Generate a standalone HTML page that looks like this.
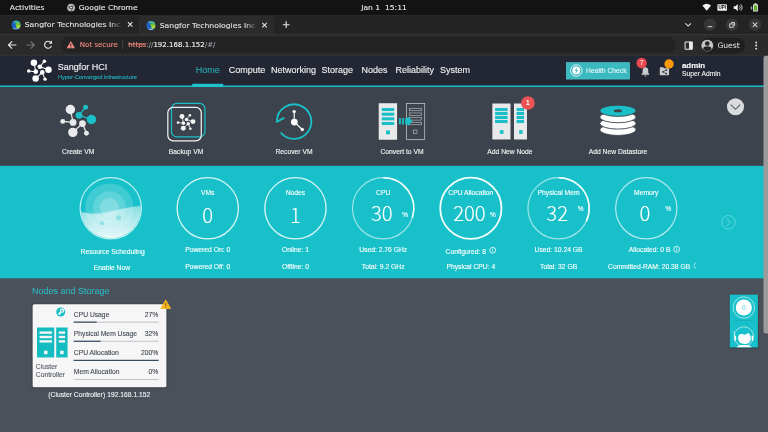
<!DOCTYPE html>
<html lang="en">
<head>
<meta charset="utf-8">
<title>Sangfor Technologies Inc.</title>
<style>
*{box-sizing:border-box;margin:0;padding:0}
html,body{width:768px;height:432px;overflow:hidden;background:#4a515b}
body{font-family:"Liberation Sans",Arial,sans-serif;color:#fff}
#s{position:absolute;left:0;top:0;width:1366px;height:768px;transform:scale(0.562225);transform-origin:0 0;overflow:hidden;background:#4a515b}
#s div,#s span,#s svg{position:absolute}
#s{-webkit-text-stroke:.2px currentColor}
.t{white-space:nowrap;line-height:1}
.c{white-space:nowrap;line-height:1;transform:translateX(-50%)}
.ui{font-family:"DejaVu Sans","Liberation Sans",sans-serif}
/* gnome top bar */
#gn{left:0;top:0;width:1366px;height:27px;background:#131313;font-size:13.5px;color:#e8e8e8}
/* chrome */
#tabs{left:0;top:27px;width:1366px;height:34px;background:#242424}
#tabs .tab{top:0;height:34px;width:240px;font-size:13.7px;color:#e2e2e2}
#tabs .act{background:#2b2b2b;border-radius:9px 9px 0 0;top:1px;height:33px;border:1px solid #3a3a3a;border-bottom:none}
#tb{left:0;top:61px;width:1366px;height:38px;background:#2b2b2b;border-top:1px solid #3a3a3a}
#url{left:108px;top:3px;width:1094px;height:29px;border-radius:14.5px;background:#232323;font-size:12.5px}
.fav{width:16px;height:16px;border-radius:50%;overflow:hidden;background:#2f7fd0}
/* app */
#hd{left:0;top:98.6px;width:1366px;height:54.4px;background:#232733}
#hl{left:0;top:152px;width:1366px;height:3px;background:#1bbcc5}
#ib{left:0;top:155px;width:1366px;height:140px;background:#3c434c}
#ts{left:0;top:294.5px;width:1366px;height:200.6px;background:#18c1c9}
.nav{font-size:16px;color:#f2f2f2;top:117.3px}
.lab{font-size:12px;color:#f4f4f4}
.sl{font-size:12px;color:#fff}
.num{font-family:"Noto Sans CJK SC","Liberation Sans",sans-serif;font-weight:300;font-size:36px;-webkit-text-stroke:.25px #fff;color:#fff;line-height:1;white-space:nowrap}
.pct{font-size:11.5px;color:#fff}
.row{font-size:12px;color:#444b55}
.val{font-size:12px;color:#444b55;text-align:right;width:60px}
.trk{height:2px;width:150.5px;left:131px;background:#c0c8d1}
.fil{height:2.4px;left:0;top:-.2px;background:#324459}
</style>
</head>
<body>
<div id="s">

<div id="gn" class="ui">
<span class="t" style="left:17.5px;top:6.8px">Activities</span>
<svg style="left:119px;top:6px" width="15" height="15" viewBox="0 0 16 16"><circle cx="8" cy="8" r="7.5" fill="#bdbdbd"/><circle cx="8" cy="8" r="3.2" fill="#131313"/><circle cx="8" cy="8" r="2.2" fill="#d8d8d8"/><path d="M8 4.8H14.6M5.2 9.6L2 3.8M10.8 9.6L7.6 15.4" stroke="#131313" stroke-width="1" fill="none"/></svg>
<span class="t" style="left:140px;top:6.8px">Google Chrome</span>
<span class="c" style="left:683px;top:6.8px">Jan 1&nbsp; 15:11</span>
<svg style="left:1245px;top:3px" width="110" height="21" viewBox="1245 3 110 21">
<path d="M1257 19.3L1249.3 9.7A12 12 0 0 1 1264.7 9.7Z" fill="#f0f0f0"/>
<rect x="1276" y="7.5" width="17" height="11.8" rx="1.5" fill="#f0f0f0"/><text x="1284.5" y="16.5" font-family="Liberation Sans,sans-serif" font-size="8" font-weight="700" text-anchor="middle" fill="#131313">UPI</text>
<path d="M1305 11h3.2l4-3.8v12.6l-4-3.8H1305z" fill="#f0f0f0"/><path d="M1315 10.2a4.5 4.5 0 0 1 0 6.6M1317.5 7.8a8 8 0 0 1 0 11.4" stroke="#f0f0f0" stroke-width="1.5" fill="none"/>
<rect x="1339.5" y="7.5" width="8.5" height="13" rx="1" fill="#f0f0f0"/><rect x="1342" y="5.8" width="3.5" height="2" fill="#f0f0f0"/><rect x="1341" y="9.5" width="5.5" height="9.5" fill="#5fae2e"/><path d="M1337.5 10l-3 4.5h2.2l-1 4 3-4.8h-2.2z" fill="#f0f0f0"/>
</svg>
</div>
<div id="tabs" class="ui">
<div class="tab" style="left:8px"><svg style="left:12px;top:9px" width="17" height="17" viewBox="0 0 16 16"><defs><clipPath id="fc129"><circle cx="8" cy="8" r="7.7"/></clipPath></defs><g clip-path="url(#fc129)"><rect width="16" height="16" fill="#2467c8"/><path d="M3 0h13v4.5H9.5C7 4.5 6 3 3 2.5z" fill="#3cb4a5"/><path d="M7.5 4.5C10 4 13 4.2 16 5v7.5C13 13.5 10 13 8.5 12 7 11 9 9.5 8 8.5 7 7.5 6.5 5.5 7.5 4.5z" fill="#6cc13a"/><path d="M9 9c2-.8 5-.8 7 0v3c-2 1-5 1-6.5 0-.8-.6-.8-2.2-.5-3z" fill="#b2d930"/><path d="M0 6.5h6.5v1.5H0zM0 10h7.5v1.3H0z" fill="#1b55b8"/><path d="M2 13c3 1 7 1 11 0v3H2z" fill="#8cc6ea"/></g></svg><span class="t" style="left:36px;top:10px;width:176px;overflow:hidden;-webkit-mask-image:linear-gradient(90deg,#000 86%,transparent 99%);mask-image:linear-gradient(90deg,#000 86%,transparent 99%)">Sangfor Technologies Inc.</span><svg style="left:218px;top:11px" width="11" height="11" viewBox="0 0 11 11"><path d="M1.5 1.5l8 8M9.5 1.5l-8 8" stroke="#e6e6e6" stroke-width="1.9"/></svg></div>
<div class="tab act" style="left:247px"><svg style="left:12px;top:8px" width="17" height="17" viewBox="0 0 16 16"><defs><clipPath id="fc128"><circle cx="8" cy="8" r="7.7"/></clipPath></defs><g clip-path="url(#fc128)"><rect width="16" height="16" fill="#2467c8"/><path d="M3 0h13v4.5H9.5C7 4.5 6 3 3 2.5z" fill="#3cb4a5"/><path d="M7.5 4.5C10 4 13 4.2 16 5v7.5C13 13.5 10 13 8.5 12 7 11 9 9.5 8 8.5 7 7.5 6.5 5.5 7.5 4.5z" fill="#6cc13a"/><path d="M9 9c2-.8 5-.8 7 0v3c-2 1-5 1-6.5 0-.8-.6-.8-2.2-.5-3z" fill="#b2d930"/><path d="M0 6.5h6.5v1.5H0zM0 10h7.5v1.3H0z" fill="#1b55b8"/><path d="M2 13c3 1 7 1 11 0v3H2z" fill="#8cc6ea"/></g></svg><span class="t" style="left:36px;top:9px;width:176px;overflow:hidden;-webkit-mask-image:linear-gradient(90deg,#000 86%,transparent 99%);mask-image:linear-gradient(90deg,#000 86%,transparent 99%)">Sangfor Technologies Inc.</span><svg style="left:217px;top:10px" width="11" height="11" viewBox="0 0 11 11"><path d="M1.5 1.5l8 8M9.5 1.5l-8 8" stroke="#e6e6e6" stroke-width="1.9"/></svg></div>
<svg style="left:502px;top:10px" width="14" height="14" viewBox="0 0 14 14"><path d="M7 1v12M1 7h12" stroke="#e6e6e6" stroke-width="2"/></svg>
<svg style="left:1210px;top:4px" width="150" height="26" viewBox="1210 4 150 26">
<path d="M1219 14.5l5 5 5-5" stroke="#e6e6e6" stroke-width="1.8" fill="none"/>
<circle cx="1263" cy="17" r="11" fill="#373737"/>
<circle cx="1302" cy="17" r="11" fill="#373737"/>
<circle cx="1343" cy="17" r="11" fill="#373737"/>
<path d="M1259 20.5h8" stroke="#e6e6e6" stroke-width="1.6"/>
<rect x="1298" y="15.5" width="6" height="6" fill="none" stroke="#e8e8e8" stroke-width="1.5"/><path d="M1300.5 13h6v6" fill="none" stroke="#e8e8e8" stroke-width="1.5"/>
<path d="M1339 13l8 8M1347 13l-8 8" stroke="#f0f0f0" stroke-width="1.8"/>
</svg>
</div>
<div id="tb" class="ui">
<svg style="left:0;top:0" width="108" height="36" viewBox="0 62 108 36">
<path d="M29 80H15M21.5 73.5L15 80l6.5 6.5" stroke="#e8e8e8" stroke-width="2" fill="none"/>
<path d="M47 80H61M54.5 73.5L61 80l-6.5 6.5" stroke="#757575" stroke-width="2" fill="none"/>
<path d="M90.8 76A6.3 6.3 0 1 0 91.6 81.5" stroke="#e8e8e8" stroke-width="2" fill="none"/><path d="M92.5 72v5.8h-5.8z" fill="#e8e8e8"/>
</svg>
<div id="url">
<svg style="left:10px;top:7px" width="16" height="15" viewBox="0 0 16 15"><path d="M8 .8L15.5 14H.5z" fill="#f28b82"/><path d="M8 5.5v4.5M8 11.3v1.5" stroke="#1e1e1e" stroke-width="1.6"/></svg>
<span class="t" style="left:34px;top:8px;color:#f28b82">Not secure</span>
<div style="left:110px;top:6px;width:1px;height:17px;background:#5a5a5a"></div>
<span class="t" style="left:120px;top:8px;color:#9aa0a6"><span style="position:static;color:#f28b82;text-decoration:line-through">https</span>://<span style="position:static;color:#f1f1f1">192.168.1.152</span>/#/</span>
</div>
<svg style="left:1210px;top:0" width="156" height="36" viewBox="1210 61 156 36">
<rect x="1218.5" y="73.5" width="13" height="13" rx="1" fill="none" stroke="#e8e8e8" stroke-width="1.8"/><rect x="1225.5" y="73.5" width="6" height="13" fill="#e8e8e8"/>
<rect x="1246" y="66" width="79" height="28" rx="14" fill="#1f1f1f"/>
<circle cx="1258" cy="80" r="10.5" fill="#c6c6c6"/><circle cx="1258" cy="76.3" r="4.1" fill="#262626"/><path d="M1250.3 86.8a7.7 5.6 0 0 1 15.4 0a10.5 10.5 0 0 1-15.4 0z" fill="#262626"/>
<text x="1276" y="84.8" font-family="DejaVu Sans,Liberation Sans,sans-serif" font-size="13.5" fill="#e8e8e8">Guest</text>
<circle cx="1345" cy="74.5" r="1.7" fill="#e8e8e8"/>
<circle cx="1345" cy="80" r="1.7" fill="#e8e8e8"/>
<circle cx="1345" cy="85.5" r="1.7" fill="#e8e8e8"/>
</svg>
</div>
<div id="hd"></div><div id="hl"></div>
<div style="left:341.5px;top:149px;width:55.5px;height:6px;background:#1fc3cb"></div>
<svg style="left:40px;top:100px" width="60" height="52" viewBox="40 100 60 52"><line x1="60.3" y1="111.7" x2="63.7" y2="127.5" stroke="#ffffff" stroke-width="1.79"/><line x1="51" y1="126.2" x2="63.7" y2="127.5" stroke="#ffffff" stroke-width="1.79"/><line x1="63.4" y1="139.7" x2="75.2" y2="128.8" stroke="#ffffff" stroke-width="1.79"/><line x1="75.2" y1="128.8" x2="80.1" y2="140.8" stroke="#ffffff" stroke-width="1.79"/><line x1="79" y1="108.8" x2="70.9" y2="118.8" stroke="#ffffff" stroke-width="1.79"/><line x1="70.9" y1="118.8" x2="86.2" y2="123.9" stroke="#ffffff" stroke-width="1.79"/><circle cx="60.3" cy="111.7" r="5.8" fill="#ffffff"/><circle cx="51" cy="126.2" r="3.04" fill="#ffffff"/><circle cx="63.7" cy="127.5" r="4.14" fill="#ffffff"/><circle cx="75.2" cy="128.8" r="4.14" fill="#ffffff"/><circle cx="63.4" cy="139.7" r="5.8" fill="#ffffff"/><circle cx="80.1" cy="140.8" r="3.04" fill="#ffffff"/><circle cx="79" cy="108.8" r="3.04" fill="#ffffff"/><circle cx="70.9" cy="118.8" r="4.14" fill="#ffffff"/><circle cx="86.2" cy="123.9" r="5.8" fill="#ffffff"/></svg>
<span class="t" style="left:102.6px;top:111.3px;font-size:16px;color:#f4f4f4">Sangfor HCI</span>
<span class="t" style="left:103px;top:132.3px;font-size:10.2px;color:#23b0b9;letter-spacing:-0.1px">Hyper-Converged Infrastructure</span>
<span class="t nav" style="left:348px;color:#27a9b2">Home</span>
<span class="t nav" style="left:407px">Compute</span>
<span class="t nav" style="left:482px">Networking</span>
<span class="t nav" style="left:572px">Storage</span>
<span class="t nav" style="left:643px">Nodes</span>
<span class="t nav" style="left:703.4px">Reliability</span>
<span class="t nav" style="left:782.6px">System</span>
<div style="left:1006.5px;top:110.5px;width:113.8px;height:30.5px;background:#3ab9c1;border:1px solid #54c8cf"></div>
<svg style="left:1012px;top:113px" width="26" height="26" viewBox="1012 113 26 26"><circle cx="1025" cy="125.5" r="10.2" fill="none" stroke="#fff" stroke-width="1.5"/><circle cx="1025" cy="125.5" r="7" fill="#fff"/><path d="M1026.5 120l-4.5 6h3l-1.5 5 4.8-6.3h-3z" fill="#3ab9c1"/></svg>
<span class="t" style="left:1042.3px;top:119.3px;font-size:12px;color:#e4f6f7">Health Check</span>
<svg style="left:1130px;top:100px" width="75" height="45" viewBox="1130 100 75 45">
<path d="M1148 119.5c-3.3 0-5 2.5-5 5.5v4.5l-2 2.5v1h14v-1l-2-2.5v-4.5c0-3-1.7-5.5-5-5.5z" fill="#c9cacd"/><path d="M1146 134.2a2 2 0 0 0 4 0z" fill="#c9cacd"/>
<circle cx="1141.3" cy="112" r="9.3" fill="#e9484f"/><text x="1141.3" y="116.3" font-size="12.5" font-family="Liberation Sans,sans-serif" text-anchor="middle" fill="#fff">7</text>
<path d="M1173.5 120.5a1 1 0 0 1 1-1h5l1.5 2h8a1 1 0 0 1 1 1v10.5a1 1 0 0 1-1 1h-14.5a1 1 0 0 1-1-1z" fill="#c9cacd"/>
<circle cx="1184.8" cy="124.8" r="1.5" fill="#232733"/><circle cx="1179.5" cy="127.8" r="1.5" fill="#232733"/><circle cx="1184.8" cy="130.8" r="1.5" fill="#232733"/><path d="M1184.8 124.8l-5.3 3 5.3 3" stroke="#232733" stroke-width="0.9" fill="none"/>
<circle cx="1190" cy="113.7" r="8.3" fill="#f89a0b"/>
</svg>
<span class="t" style="left:1213px;top:109.3px;font-size:14px;font-weight:700;color:#fff">admin</span>
<span class="t" style="left:1213px;top:124.5px;font-size:12px;color:#f0f0f0">Super Admin</span>
<div id="ib"></div>
<svg style="left:0;top:155px" width="1366" height="140" viewBox="0 155 1366 140">
<line x1="125.2" y1="194.8" x2="130" y2="217.7" stroke="#e9eaec" stroke-width="2.2"/><line x1="111.6" y1="215.9" x2="130" y2="217.7" stroke="#e9eaec" stroke-width="2.2"/><line x1="129.6" y1="235.4" x2="146.7" y2="219.7" stroke="#e9eaec" stroke-width="2.2"/><line x1="146.7" y1="219.7" x2="153.8" y2="237" stroke="#e9eaec" stroke-width="2.2"/><line x1="152.3" y1="190.7" x2="140.5" y2="205.2" stroke="#1bbfc7" stroke-width="2.2"/><line x1="140.5" y1="205.2" x2="162.7" y2="212.5" stroke="#1bbfc7" stroke-width="2.2"/><circle cx="125.2" cy="194.8" r="8.4" fill="#e9eaec"/><circle cx="111.6" cy="215.9" r="4.4" fill="#e9eaec"/><circle cx="130" cy="217.7" r="6" fill="#e9eaec"/><circle cx="146.7" cy="219.7" r="6" fill="#e9eaec"/><circle cx="129.6" cy="235.4" r="8.4" fill="#e9eaec"/><circle cx="153.8" cy="237" r="4.4" fill="#e9eaec"/><circle cx="152.3" cy="190.7" r="4.4" fill="#1bbfc7"/><circle cx="140.5" cy="205.2" r="6" fill="#1bbfc7"/><circle cx="162.7" cy="212.5" r="8.4" fill="#1bbfc7"/>
<rect x="305" y="184" width="59.5" height="59.5" rx="9.5" fill="none" stroke="#1bbfc7" stroke-width="2.2"/>
<rect x="298.5" y="191" width="59.5" height="59.5" rx="9.5" fill="none" stroke="#f2f2f2" stroke-width="2.2"/>
<line x1="323.7" y1="207.1" x2="326.2" y2="219" stroke="#f4f4f4" stroke-width="1.35"/><line x1="316.6" y1="218.1" x2="326.2" y2="219" stroke="#f4f4f4" stroke-width="1.35"/><line x1="326" y1="228.2" x2="334.9" y2="220" stroke="#f4f4f4" stroke-width="1.35"/><line x1="334.9" y1="220" x2="338.6" y2="229" stroke="#f4f4f4" stroke-width="1.35"/><line x1="337.8" y1="205" x2="331.7" y2="212.5" stroke="#f4f4f4" stroke-width="1.35"/><line x1="331.7" y1="212.5" x2="343.2" y2="216.3" stroke="#f4f4f4" stroke-width="1.35"/><circle cx="323.7" cy="207.1" r="4.37" fill="#f4f4f4"/><circle cx="316.6" cy="218.1" r="2.29" fill="#f4f4f4"/><circle cx="326.2" cy="219" r="3.12" fill="#f4f4f4"/><circle cx="334.9" cy="220" r="3.12" fill="#f4f4f4"/><circle cx="326" cy="228.2" r="4.37" fill="#f4f4f4"/><circle cx="338.6" cy="229" r="2.29" fill="#f4f4f4"/><circle cx="337.8" cy="205" r="2.29" fill="#f4f4f4"/><circle cx="331.7" cy="212.5" r="3.12" fill="#f4f4f4"/><circle cx="343.2" cy="216.3" r="4.37" fill="#f4f4f4"/>
<path d="M492.4 214.7A30.7 30.7 0 1 1 499.2 235.6" fill="none" stroke="#1bbfc7" stroke-width="3.3"/>
<path d="M492.1 216.7l12.5-6.5" stroke="#1bbfc7" stroke-width="3.3" fill="none" stroke-linecap="round"/>
<path d="M523.3 198.5V217L537.6 230.3" stroke="#fff" stroke-width="2" fill="none"/><circle cx="523.5" cy="217" r="6" fill="#fff"/><circle cx="523.2" cy="198.5" r="3" fill="#fff"/><circle cx="537.6" cy="230.3" r="3" fill="#fff"/>
<rect x="673.6" y="183.6" width="32.7" height="65" fill="#e8e9eb"/>
<rect x="679" y="192.1" width="22.2" height="5.4" fill="#1bbfc7"/>
<rect x="679" y="200.4" width="22.2" height="5.4" fill="#1bbfc7"/>
<rect x="679" y="208.7" width="22.2" height="5.4" fill="#1bbfc7"/>
<rect x="679" y="217" width="22.2" height="5.4" fill="#1bbfc7"/>
<rect x="686.7" y="232.1" width="7" height="6.8" fill="#1bbfc7"/>
<rect x="723.1" y="184.2" width="32.3" height="63.9" fill="none" stroke="#c6c8cb" stroke-width="1.3"/>
<rect x="728.5" y="192.6" width="21.2" height="4.4" fill="none" stroke="#c0c2c6" stroke-width="1.1"/>
<rect x="728.5" y="200.9" width="21.2" height="4.4" fill="none" stroke="#c0c2c6" stroke-width="1.1"/>
<rect x="728.5" y="209.2" width="21.2" height="4.4" fill="none" stroke="#c0c2c6" stroke-width="1.1"/>
<rect x="728.5" y="217.5" width="21.2" height="4.4" fill="none" stroke="#c0c2c6" stroke-width="1.1"/>
<rect x="735.5" y="231.3" width="6.2" height="6" fill="none" stroke="#c0c2c6" stroke-width="1.1"/>
<rect x="709.7" y="209.9" width="3.3" height="11.5" fill="#1bbfc7"/><rect x="715.2" y="209.9" width="3.3" height="11.5" fill="#1bbfc7"/><path d="M720.8 209.9h4.4v-3l9 8.7-9 8.7v-2.9h-4.4z" fill="#1bbfc7"/>
<rect x="875.7" y="184.1" width="32.3" height="64" fill="#e8e9eb"/>
<rect x="880.6" y="192.1" width="22.2" height="5.5" fill="#1bbfc7"/>
<rect x="880.6" y="199.2" width="22.2" height="5.5" fill="#1bbfc7"/>
<rect x="880.6" y="206.3" width="22.2" height="5.5" fill="#1bbfc7"/>
<rect x="880.6" y="213.4" width="22.2" height="5.5" fill="#1bbfc7"/>
<rect x="889" y="231.4" width="6.6" height="6.7" fill="#1bbfc7"/>
<rect x="914.2" y="184.1" width="23.1" height="64" fill="#e8e9eb"/>
<rect x="918.8" y="192.1" width="13.4" height="5.5" fill="#1bbfc7"/>
<rect x="918.8" y="199.2" width="13.4" height="5.5" fill="#1bbfc7"/>
<rect x="918.8" y="206.3" width="13.4" height="5.5" fill="#1bbfc7"/>
<rect x="918.8" y="213.4" width="13.4" height="5.5" fill="#1bbfc7"/>
<rect x="923.5" y="231.4" width="6" height="6.7" fill="#1bbfc7"/>
<circle cx="938.9" cy="183.2" r="12.2" fill="#ec5355"/><text x="938.9" y="187.3" font-size="11.5" font-family="Liberation Sans,sans-serif" font-weight="700" text-anchor="middle" fill="#fff">1</text>
<ellipse cx="1099" cy="230.9" rx="32.2" ry="10" fill="#fff" stroke="#3c434c" stroke-width="1.6"/>
<ellipse cx="1099" cy="219.6" rx="32.2" ry="10" fill="#fff" stroke="#3c434c" stroke-width="1.6"/>
<ellipse cx="1099" cy="208.3" rx="32.2" ry="10" fill="#fff" stroke="#3c434c" stroke-width="1.6"/>
<ellipse cx="1099" cy="197" rx="32.2" ry="10" fill="#1bbfc7" stroke="#3c434c" stroke-width="1.6"/><ellipse cx="1099" cy="197" rx="7.3" ry="2.8" fill="#3c434c"/>
<circle cx="1308.2" cy="189.8" r="15.2" fill="#d9dbde"/><path d="M1299.8 186l8.4 8.4 8.4-8.4" stroke="#555b63" stroke-width="1.9" fill="none"/>
</svg>
<span class="c lab" style="left:139px;top:263.6px">Create VM</span>
<span class="c lab" style="left:331px;top:263.6px">Backup VM</span>
<span class="c lab" style="left:523px;top:263.6px">Recover VM</span>
<span class="c lab" style="left:715px;top:263.6px">Convert to VM</span>
<span class="c lab" style="left:907px;top:263.6px">Add New Node</span>
<span class="c lab" style="left:1099px;top:263.6px">Add New Datastore</span>
<div id="ts"></div>
<svg style="left:0;top:294.5px" width="1366" height="199.5" viewBox="0 294.5 1366 199.5">
<defs><clipPath id="rc"><circle cx="197" cy="370" r="53.5"/></clipPath><linearGradient id="wg" x1="0" y1="0" x2="0" y2="1"><stop offset="0" stop-color="#fff" stop-opacity=".38"/><stop offset=".6" stop-color="#fff" stop-opacity=".7"/><stop offset="1" stop-color="#fff" stop-opacity=".95"/></linearGradient></defs>
<g clip-path="url(#rc)"><circle cx="194.5" cy="368.8" r="43" fill="#fff" fill-opacity=".17"/><circle cx="194.5" cy="368.8" r="29" fill="#fff" fill-opacity=".17"/><circle cx="194.5" cy="368.8" r="17" fill="#fff" fill-opacity=".22"/>
<path d="M140 374C155 379 170 379 190 375S230 366 256 364V430H140z" fill="#fff" fill-opacity=".18"/>
<path d="M140 376C160 381 178 381 198 376S236 367 256 366V430H140z" fill="url(#wg)"/>
<circle cx="181.5" cy="396.5" r="3.8" fill="#18c1c9" fill-opacity=".3"/><circle cx="211" cy="387" r="4.6" fill="#18c1c9" fill-opacity=".3"/></g>
<circle cx="197" cy="370" r="54.5" fill="none" stroke="#bdeff2" stroke-width="2.2"/>
<circle cx="369.5" cy="370" r="54.5" fill="none" stroke="#d6f5f7" stroke-width="2.4"/>
<circle cx="525.5" cy="370" r="54.5" fill="none" stroke="#d6f5f7" stroke-width="2.4"/>
<circle cx="681.5" cy="370" r="54.5" fill="none" stroke="#9be5e9" stroke-width="2.2"/><path d="M681.5 315.5A54.5 54.5 0 0 1 733.3 386.8" fill="none" stroke="#f2fcfc" stroke-width="2.8"/>
<circle cx="837.5" cy="370" r="54.5" fill="none" stroke="#f4fdfd" stroke-width="3.2"/>
<circle cx="993.5" cy="370" r="54.5" fill="none" stroke="#9be5e9" stroke-width="2.2"/><path d="M993.5 315.5A54.5 54.5 0 0 1 1042.8 393.2" fill="none" stroke="#f2fcfc" stroke-width="2.8"/>
<circle cx="1149.5" cy="370" r="54.5" fill="none" stroke="#b0ebee" stroke-width="2.2"/>
<circle cx="1295.7" cy="394.8" r="12" fill="none" stroke="#6fdbe0" stroke-width="1.4"/><path d="M1293 388.5l6 6.3-6 6.3" fill="none" stroke="#6fdbe0" stroke-width="1.6"/>
<circle cx="876.3" cy="444.6" r="5.3" fill="none" stroke="#fff" stroke-width="1.4"/><path d="M876.3 443.8v3.6M876.3 441.3v1.5" stroke="#fff" stroke-width="1.4"/>
<circle cx="1203.5" cy="443" r="5.3" fill="none" stroke="#fff" stroke-width="1.4"/><path d="M1203.5 442.2v3.6M1203.5 439.7v1.5" stroke="#fff" stroke-width="1.4"/>
</svg>
<span class="c sl" style="left:200.3px;top:441.3px">Resource Scheduling</span>
<span class="c sl" style="left:199px;top:470px">Enable Now</span>
<span class="c sl" style="left:369.5px;top:336.3px">VMs</span>
<span class="num" style="left:369.5px;top:362.8px;transform:translateX(-50%)">0</span>
<span class="c sl" style="left:369.5px;top:439.1px">Powered On: 0</span>
<span class="c sl" style="left:369.5px;top:469.1px">Powered Off: 0</span>
<span class="c sl" style="left:525.5px;top:336.3px">Nodes</span>
<span class="num" style="left:525.5px;top:362.8px;transform:translateX(-50%)">1</span>
<span class="c sl" style="left:525.5px;top:439.1px">Online: 1</span>
<span class="c sl" style="left:525.5px;top:469.1px">Offline: 0</span>
<span class="c sl" style="left:681.5px;top:336.3px">CPU</span>
<span class="num" style="left:679px;top:359.2px;transform:translateX(-50%)">30</span>
<span class="c pct" style="left:720.8px;top:376.5px">%</span>
<span class="c sl" style="left:681.5px;top:439.1px">Used: 2.76 GHz</span>
<span class="c sl" style="left:681.5px;top:469.1px">Total: 9.2 GHz</span>
<span class="c sl" style="left:837.5px;top:336.3px">CPU Allocation</span>
<span class="num" style="left:835px;top:359.2px;transform:translateX(-50%)">200</span>
<span class="c pct" style="left:876.8px;top:376.5px">%</span>
<span class="c sl" style="left:828.5px;top:440.6px">Configured: 8</span>
<span class="c sl" style="left:837.5px;top:469.1px">Physical CPU: 4</span>
<span class="c sl" style="left:993.5px;top:336.3px">Physical Mem</span>
<span class="num" style="left:991px;top:359.2px;transform:translateX(-50%)">32</span>
<span class="c pct" style="left:1032.8px;top:366.5px">%</span>
<span class="c sl" style="left:993.5px;top:439.1px">Used: 10.24 GB</span>
<span class="c sl" style="left:993.5px;top:469.1px">Total: 32 GB</span>
<span class="c sl" style="left:1149.5px;top:336.3px">Memory</span>
<span class="num" style="left:1147px;top:359.2px;transform:translateX(-50%)">0</span>
<span class="c pct" style="left:1188.8px;top:366.5px">%</span>
<span class="c sl" style="left:1155.5px;top:439.1px">Allocated: 0 B</span>
<span class="c sl" style="left:1154.5px;top:469.1px">Committed-RAM: 20.38 GB</span>
<svg style="left:1233px;top:466px" width="6" height="14" viewBox="0 0 6 14"><path d="M5 1.5A5.2 5.2 0 0 0 5 11.5" fill="none" stroke="#fff" stroke-width="1"/></svg>
<span class="t" style="left:57px;top:510.3px;font-size:16px;color:#2cb6bf">Nodes and Storage</span>
<div style="left:57.8px;top:541px;width:238.3px;height:147.5px;background:#f6f6f6;border-radius:3px;box-shadow:0 1px 3px rgba(0,0,0,.35)"></div>
<svg style="left:57px;top:530px" width="250" height="160" viewBox="57 530 250 160">
<circle cx="108" cy="555" r="8" fill="#1bbfc7"/><circle cx="110.4" cy="552.6" r="2.7" fill="none" stroke="#fff" stroke-width="2.1"/><path d="M108.6 554.4l-4.6 4.6M105.6 557.4l1.9 1.9" stroke="#fff" stroke-width="2.3" fill="none"/>
<path d="M294.8 533.5l8.6 15.2h-17.2z" fill="#f6b91f" stroke="#f6b91f" stroke-width="1.5" stroke-linejoin="round"/><path d="M294.8 538.5v5.8M294.8 545.6v1.8" stroke="#7a5a10" stroke-width="1.7"/>
<rect x="65.8" y="582.5" width="30.7" height="53.3" fill="#12bcc1"/>
<rect x="70.3" y="589.5" width="22" height="4.2" fill="#f6f6f6"/>
<rect x="70.3" y="597.3" width="22" height="4.2" fill="#f6f6f6"/>
<rect x="70.3" y="605.1" width="22" height="4.2" fill="#f6f6f6"/>
<rect x="78.3" y="623.8" width="6.2" height="6.2" fill="#f6f6f6"/>
<rect x="100" y="582.5" width="20.2" height="53.3" fill="#12bcc1"/>
<rect x="104.5" y="589.5" width="11.2" height="4.2" fill="#f6f6f6"/>
<rect x="104.5" y="597.3" width="11.2" height="4.2" fill="#f6f6f6"/>
<rect x="104.5" y="605.1" width="11.2" height="4.2" fill="#f6f6f6"/>
<rect x="107" y="623.8" width="6.2" height="6.2" fill="#f6f6f6"/>
</svg>
<span class="t row" style="left:63.6px;top:645.5px;line-height:14px;white-space:normal;width:60px;color:#555c66">Cluster Controller</span>
<span class="t row" style="left:131.2px;top:552.6px">CPU Usage</span>
<span class="t val" style="left:221.5px;top:552.6px">27%</span>
<div class="trk" style="top:571.7px"><div class="fil" style="width:27%"></div></div>
<span class="t row" style="left:131.2px;top:586.9px">Physical Mem Usage</span>
<span class="t val" style="left:221.5px;top:586.9px">32%</span>
<div class="trk" style="top:606px"><div class="fil" style="width:32%"></div></div>
<span class="t row" style="left:131.2px;top:620.7px">CPU Allocation</span>
<span class="t val" style="left:221.5px;top:620.7px">200%</span>
<div class="trk" style="top:639.7px"><div class="fil" style="width:100%"></div></div>
<span class="t row" style="left:131.2px;top:654.9px">Mem Allocation</span>
<span class="t val" style="left:221.5px;top:654.9px">0%</span>
<div class="trk" style="top:674px"><div class="fil" style="width:0%"></div></div>
<span class="c" style="left:176.6px;top:696.3px;font-size:12px;color:#f2f2f2">(Cluster Controller) 192.168.1.152</span>
<div style="left:1298.4px;top:524px;width:49.8px;height:94px;background:#18c1c9;box-shadow:0 1px 3px rgba(0,0,0,.4)"></div>
<svg style="left:1298px;top:524px" width="50" height="94" viewBox="1298 524 50 94">
<circle cx="1323" cy="547" r="19" fill="none" stroke="#fff" stroke-width="1"/><circle cx="1323" cy="547" r="14.3" fill="#fff"/><text x="1323" y="551.2" font-size="12" font-family="Liberation Sans,sans-serif" text-anchor="middle" fill="#4ccdd4">0</text>
<path d="M1304 570h38" stroke="#14a8af" stroke-width="1"/>
<circle cx="1323" cy="598.6" r="17.3" fill="none" stroke="#fff" stroke-width="1"/>
<path d="M1313 603.5c-.3-3 .2-5.5 1.2-7 1.5-2.3 4-2.8 6.5-1.8 2 .8 3.5 1.3 5.5.3 1.8-.9 3.3-2.3 5.3-2.7 1.5 2 3.3 4 3.7 6.5.4 3-.2 6.5-1.5 9-1.5 2.8-4.5 3.9-8.5 3.9s-7.5-.7-9.7-3c-1.5-1.5-2.3-3.2-2.5-5.2z" fill="#fff"/>
<path d="M1310 618c1.5-3 7-4.3 13.5-4.3s12 1.3 13.5 4.3z" fill="#fff"/>
<rect x="1306.3" y="597" width="3" height="9" rx="1.5" fill="#fff"/><rect x="1336.8" y="597" width="3" height="9" rx="1.5" fill="#fff"/><path d="M1307.5 598l-3-8.8" stroke="#fff" stroke-width="1" fill="none"/>
</svg>
<div style="left:1357.7px;top:98.5px;width:8.5px;height:494.5px;background:#9b9b9b;border-radius:4px 0 0 4px"></div>
</div>
</body>
</html>
